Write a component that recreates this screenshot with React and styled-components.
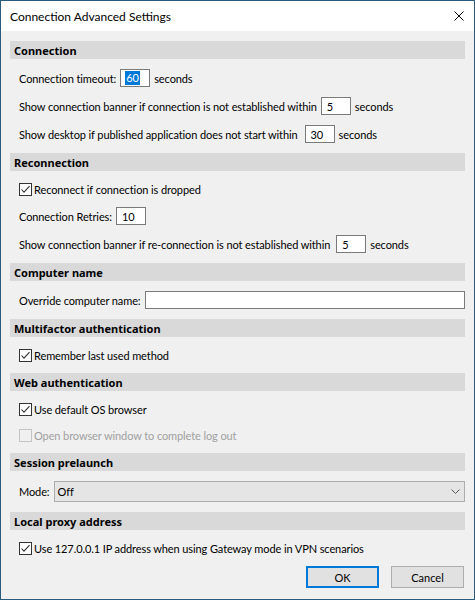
import React from 'react';
import styled, { createGlobalStyle } from 'styled-components';

const GlobalStyle = createGlobalStyle`
  html, body { margin: 0; padding: 0; background: #f0f0f0; }
  *, *::before, *::after { box-sizing: border-box; }
`;

const Window = styled.div`
  width: 475px;
  height: 600px;
  border: 1px solid #2b5b7c;
  background: #f0f0f0;
  display: flex;
  flex-direction: column;
  font-family: Lato, "Noto Sans", sans-serif;
  font-size: 11px;
  letter-spacing: -0.1px;
  color: #000;
`;

const TitleBar = styled.div`
  height: 30px;
  flex: none;
  background: #fff;
  display: flex;
  align-items: center;
  justify-content: space-between;
  padding: 0 10px 0 9px;
`;

const Title = styled.span`
  font-size: 12px;
  letter-spacing: 0;
`;

const CloseButton = styled.div`
  width: 10px;
  height: 10px;
  display: flex;
`;

const Content = styled.div`
  flex: 1;
  display: flex;
  flex-direction: column;
  gap: 10px;
  padding: 10px 9px 0 9px;
`;

const SectionHeader = styled.div`
  height: 18px;
  background: #d9d9d9;
  font-family: "Noto Sans", Lato, sans-serif;
  font-weight: 700;
  letter-spacing: 0;
  padding-left: 4px;
  display: flex;
  align-items: center;
`;

const Row = styled.div`
  height: ${p => p.$h || 18}px;
  display: flex;
  align-items: center;
  padding-left: 9px;
  gap: ${p => p.$gap ?? 4}px;
`;

const Label = styled.span`
  white-space: nowrap;
  color: ${p => (p.$disabled ? '#a0a0a0' : '#000')};
`;

const TextBox = styled.div`
  width: ${p => (p.$w ? `${p.$w}px` : 'auto')};
  flex: ${p => (p.$grow ? 1 : 'none')};
  height: 18px;
  background: #fff;
  border: 1px solid #7a7a7a;
  display: flex;
  align-items: center;
  padding-left: 5px;
  margin-left: ${p => p.$ml ?? 0}px;
`;

const Selection = styled.span`
  background: #0078d7;
  color: #fff;
  line-height: 14px;
  padding: 0 1px;
  margin-left: -1px;
`;

const CheckBox = styled.div`
  width: 13px;
  height: 13px;
  flex: none;
  border: 1px solid ${p => (p.$disabled ? '#c4c4c4' : '#333')};
  background: ${p => (p.$disabled ? '#f0f0f0' : '#fff')};
  display: flex;
`;

const CheckLabel = styled(Label)`
  margin-left: 2px;
`;

const Select = styled.div`
  flex: 1;
  height: 21px;
  background: #e5e5e5;
  border: 1px solid #adadad;
  display: flex;
  align-items: center;
  justify-content: space-between;
  padding: 0 4px 0 3px;
`;

const Buttons = styled.div`
  display: flex;
  justify-content: flex-end;
  gap: 12px;
  padding-right: 1px;
`;

const Button = styled.div`
  width: 73px;
  height: 22px;
  background: #e1e1e1;
  border: ${p => (p.$default ? '2px solid #0078d7' : '1px solid #adadad')};
  display: flex;
  align-items: center;
  justify-content: center;
  letter-spacing: 0;
`;

const Check = ({ checked, disabled, children }) => (
  <Row $h={16} $gap={0}>
    <CheckBox $disabled={disabled}>
      {checked && (
        <svg width="11" height="11" viewBox="0 0 11 11">
          <polyline points="1.5,5.5 4,8.2 9.5,2.2" fill="none" stroke="#333" strokeWidth="1.1" />
        </svg>
      )}
    </CheckBox>
    <CheckLabel $disabled={disabled}>{children}</CheckLabel>
  </Row>
);

export default function App() {
  return (
    <>
      <GlobalStyle />
      <Window>
        <TitleBar>
          <Title>Connection Advanced Settings</Title>
          <CloseButton>
            <svg width="10" height="10" viewBox="0 0 10 10">
              <path d="M0.5 0.5 L9.5 9.5 M9.5 0.5 L0.5 9.5" stroke="#000" strokeWidth="1" />
            </svg>
          </CloseButton>
        </TitleBar>
        <Content>
          <SectionHeader>Connection</SectionHeader>
          <Row>
            <Label>Connection timeout:</Label>
            <TextBox $w={30}><Selection>60</Selection></TextBox>
            <Label>seconds</Label>
          </Row>
          <Row>
            <Label>Show connection banner if connection is not established within</Label>
            <TextBox $w={30}>5</TextBox>
            <Label>seconds</Label>
          </Row>
          <Row>
            <Label>Show desktop if published application does not start within</Label>
            <TextBox $w={30} $ml={3}>30</TextBox>
            <Label>seconds</Label>
          </Row>

          <SectionHeader>Reconnection</SectionHeader>
          <Check checked>Reconnect if connection is dropped</Check>
          <Row>
            <Label>Connection Retries:</Label>
            <TextBox $w={30}>10</TextBox>
          </Row>
          <Row>
            <Label>Show connection banner if re-connection is not established within</Label>
            <TextBox $w={30} $ml={2}>5</TextBox>
            <Label>seconds</Label>
          </Row>

          <SectionHeader>Computer name</SectionHeader>
          <Row>
            <Label>Override computer name:</Label>
            <TextBox $grow />
          </Row>

          <SectionHeader>Multifactor authentication</SectionHeader>
          <Check checked>Remember last used method</Check>

          <SectionHeader>Web authentication</SectionHeader>
          <Check checked>Use default OS browser</Check>
          <Check disabled>Open browser window to complete log out</Check>

          <SectionHeader>Session prelaunch</SectionHeader>
          <Row $h={21}>
            <Label>Mode:</Label>
            <Select>
              <span>Off</span>
              <svg width="9" height="5" viewBox="0 0 9 5">
                <polyline points="0.5,0.5 4.5,4.5 8.5,0.5" fill="none" stroke="#555" strokeWidth="1" />
              </svg>
            </Select>
          </Row>

          <SectionHeader>Local proxy address</SectionHeader>
          <Check checked>Use 127.0.0.1 IP address when using Gateway mode in VPN scenarios</Check>

          <Buttons>
            <Button $default>OK</Button>
            <Button>Cancel</Button>
          </Buttons>
        </Content>
      </Window>
    </>
  );
}
